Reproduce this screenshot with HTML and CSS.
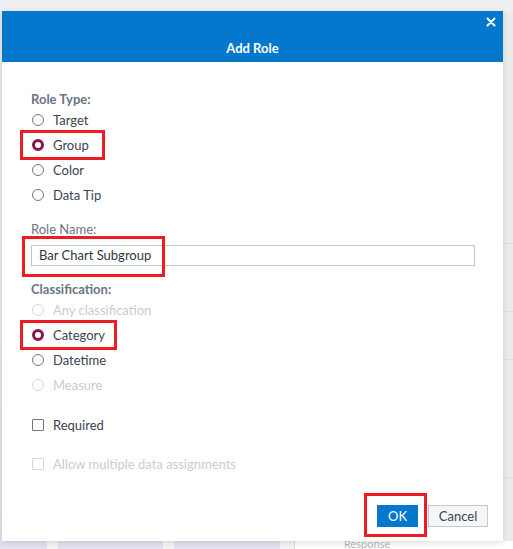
FILE: index.html
```html
<!DOCTYPE html>
<html lang="en">
<head>
<meta charset="utf-8">
<title>Add Role</title>
<link rel="stylesheet" href="styles.css">
</head>
<body>
<div class="top"></div>
<div class="main">
  <div class="edge"></div>
  <div class="dialog">
    <div class="header">
      <div class="close-row">
        <svg class="close" width="10" height="10" viewBox="0 0 10 10"><path d="M1.5 1.5 L8.5 8.5 M8.5 1.5 L1.5 8.5" stroke="#fff" stroke-width="2" stroke-linecap="round"/></svg>
      </div>
      <div class="title">Add Role</div>
    </div>
    <div class="body">
      <div class="group-label">Role Type:</div>
      <div class="row"><span class="radio"></span><span>Target</span></div>
      <div class="row marked mark-group"><span class="radio checked"></span><span>Group</span></div>
      <div class="row"><span class="radio"></span><span>Color</span></div>
      <div class="row"><span class="radio"></span><span>Data Tip</span></div>

      <div class="field-label">Role Name:</div>
      <div class="input-wrap">
        <div class="input">Bar Chart Subgroup</div>
        <div class="mark mark-input"></div>
      </div>

      <div class="group-label class-label">Classification:</div>
      <div class="row disabled"><span class="radio"></span><span>Any classification</span></div>
      <div class="row marked mark-cat"><span class="radio checked"></span><span>Category</span></div>
      <div class="row"><span class="radio"></span><span>Datetime</span></div>
      <div class="row disabled"><span class="radio"></span><span>Measure</span></div>

      <div class="row check-row"><span class="check"></span><span>Required</span></div>
      <div class="row check-row disabled"><span class="check"></span><span>Allow multiple data assignments</span></div>
    </div>
    <div class="footer">
      <div class="ok-wrap">
        <button class="btn ok">OK</button>
        <div class="mark mark-ok"></div>
      </div>
      <button class="btn cancel">Cancel</button>
    </div>
  </div>
  <div class="side">
    <div class="side-cell s1"></div>
    <div class="side-cell s2"></div>
    <div class="side-cell s3"></div>
    <div class="side-cell s4"></div>
  </div>
</div>
<div class="bottom">
  <div class="lav b1"></div>
  <div class="lav b2"></div>
  <div class="lav b3"></div>
  <div class="resp"><span class="resp-text">Response</span></div>
</div>
</body>
</html>
```

FILE: styles.css
```css
* { box-sizing: border-box; }
html, body { margin: 0; padding: 0; }
body {
  width: 513px;
  height: 549px;
  overflow: hidden;
  background: #ececec;
  font-family: Lato, "Open Sans", "Liberation Sans", sans-serif;
  font-size: 13px;
  color: #3b4252;
}
.top {
  height: 11px;
  background: #efefef;
}
.main {
  display: flex;
  height: 530px;
}
.edge {
  width: 2px;
  background: linear-gradient(#e9e9e9 0%, #e9e9e9 60%, #e2dff0 100%);
}
.dialog {
  width: 501px;
  height: 530px;
  background: #fff;
  display: flex;
  flex-direction: column;
  box-shadow: 0 2px 6px rgba(0,0,0,0.12);
  position: relative;
  z-index: 1;
}
.header {
  height: 51px;
  background: #0478cd;
  color: #fff;
  display: flex;
  flex-direction: column;
}
.close-row {
  display: flex;
  justify-content: flex-end;
  padding: 6px 7px 0 0;
  height: 17px;
}
.close { display: block; }
.title {
  text-align: center;
  font-weight: 700;
  font-size: 13px;
  line-height: 16px;
  margin-top: 12px;
}
.body {
  padding: 29px 0 0 29px;
}
.group-label {
  font-weight: 700;
  color: #6b7486;
  line-height: 16px;
  height: 16px;
}
.row {
  display: flex;
  align-items: center;
  gap: 9px;
  height: 25px;
  width: fit-content;
  padding-left: 1px;
  position: relative;
}
.radio {
  width: 12px;
  height: 12px;
  border-radius: 50%;
  border: 1px solid #6f778a;
  background: #fff;
  flex: none;
}
.radio.checked {
  border: 3.5px solid #8a1450;
}
.check {
  width: 12px;
  height: 12px;
  border: 1px solid #6f778a;
  border-radius: 1px;
  flex: none;
}
.disabled { color: #c9ccd3; }
.disabled .radio, .disabled .check { border-color: #d6d8de; }

.marked::after {
  content: "";
  position: absolute;
  left: -11px;
  top: -2.5px;
  bottom: -2.5px;
  border: 3px solid #ec1c24;
}
.mark-group::after { right: -16px; }
.mark-cat::after { right: -12px; }

.field-label {
  margin-top: 14px;
  color: #6b7486;
  line-height: 16px;
}
.input-wrap {
  position: relative;
  margin-top: 8px;
  width: 444px;
}
.input {
  height: 21px;
  border: 1px solid #c3c8d0;
  padding: 0 7px;
  line-height: 19px;
  color: #2f3644;
}
.mark {
  position: absolute;
  border: 3px solid #ec1c24;
}
.mark-input {
  left: -9px;
  top: -9px;
  width: 143px;
  height: 41px;
}
.class-label { margin-top: 15px; }
.check-row { margin-top: 15px; }
.check-row + .check-row { margin-top: 14px; }

.footer {
  margin-top: auto;
  display: flex;
  justify-content: flex-end;
  align-items: center;
  gap: 10px;
  padding: 0 15px 14px 0;
}
.ok-wrap { position: relative; }
.btn {
  height: 22px;
  font-family: Lato, "Open Sans", "Liberation Sans", sans-serif;
  font-size: 13px;
  padding: 0;
  display: block;
  border-radius: 0;
}
.ok {
  width: 41px;
  background: #0478cd;
  border: 1px solid #0478cd;
  color: #fff;
}
.cancel {
  width: 60px;
  background: #f5f6f7;
  border: 1px solid #c5c9cf;
  color: #3b4252;
}
.mark-ok {
  left: -13px;
  top: -12px;
  right: -9px;
  bottom: -10px;
}
.side {
  flex: 1;
  background: #ebebeb;
  display: flex;
  flex-direction: column;
}
.side-cell { border-bottom: 1px solid #dedede; }
.s1 { height: 233px; }
.s2 { height: 68px; }
.s3 { height: 48px; }
.s4 { height: 118px; }
.bottom {
  height: 8px;
  display: flex;
  background: #f4f4f4;
}
.lav { background: #e4e1f0; height: 8px; }
.b1 { width: 47px; }
.b2 { width: 105px; margin-left: 11px; }
.b3 { width: 106px; margin-left: 11px; }
.resp {
  margin-left: 14px;
  border-left: 1px solid #d8d8d8;
  padding-left: 49px;
  flex: 1;
  background: #fff;
  overflow: hidden;
  height: 8px;
}
.resp-text {
  display: block;
  color: #b5b8bf;
  font-size: 11px;
  line-height: 11px;
  margin-top: -3px;
}
```
